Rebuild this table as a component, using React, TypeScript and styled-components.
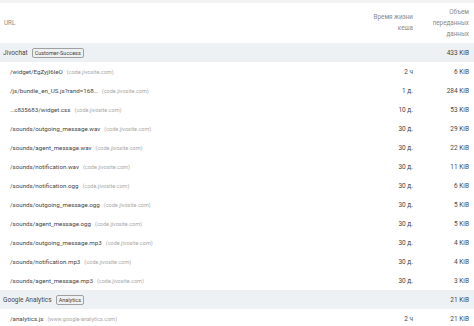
import React from "react";
import styled, { createGlobalStyle } from "styled-components";

const Global = createGlobalStyle`
  html, body { margin: 0; padding: 0; background: #fff; }
  body { font-family: Roboto, "Liberation Sans", Arial, sans-serif; }
`;

const Table = styled.div`
  width: 474px;
  border-top: 3px solid #f3f3f3;
  display: flex;
  flex-direction: column;
  color: #474747;
`;

const Row = styled.div<{ $kind?: "head" | "group" | "item" }>`
  display: grid;
  grid-template-columns: 1fr 52px 56px;
  align-items: center;
  height: ${(p) => (p.$kind === "head" ? 40 : 19)}px;
  background: ${(p) => (p.$kind === "group" ? "#eef1f4" : "#fff")};
`;

const HeadCell = styled.div<{ $right?: boolean }>`
  font-size: 6.3px;
  line-height: 11px;
  color: #8a8a8a;
  text-align: ${(p) => (p.$right ? "right" : "left")};
  padding: ${(p) => (p.$right ? "0 5px 0 0" : "0 0 0 4px")};
`;

const UrlCell = styled.div<{ $group?: boolean }>`
  display: flex;
  align-items: center;
  gap: 4px;
  padding-left: ${(p) => (p.$group ? 3 : 10)}px;
  font-size: ${(p) => (p.$group ? 6.5 : 6.2)}px;
  white-space: nowrap;
  overflow: hidden;
`;

const Domain = styled.span`
  font-size: 5.5px;
  color: #a8a8a8;
`;

const Badge = styled.span`
  font-size: 5.5px;
  border: 1px solid #a0a0a0;
  border-radius: 2px;
  padding: 1px 2px;
  line-height: 6px;
  color: #444;
`;

const NumCell = styled.div`
  font-size: 6.5px;
  text-align: right;
  padding-right: 5px;
  white-space: nowrap;
`;

type Item = { url: string; domain: string; ttl: string; size: string };
type Group = { name: string; badge: string; size: string; items: Item[] };

const jivo = "code.jivosite.com";

const groups: Group[] = [
  {
    name: "Jivochat",
    badge: "Customer-Success",
    size: "433 KiB",
    items: [
      { url: "/widget/EgZyjI6leO", domain: jivo, ttl: "2 ч", size: "6 KiB" },
      { url: "/js/bundle_en_US.js?rand=168…", domain: jivo, ttl: "1 д.", size: "284 KiB" },
      { url: "…c835683/widget.css", domain: jivo, ttl: "10 д.", size: "53 KiB" },
      { url: "/sounds/outgoing_message.wav", domain: jivo, ttl: "30 д.", size: "29 KiB" },
      { url: "/sounds/agent_message.wav", domain: jivo, ttl: "30 д.", size: "22 KiB" },
      { url: "/sounds/notification.wav", domain: jivo, ttl: "30 д.", size: "11 KiB" },
      { url: "/sounds/notification.ogg", domain: jivo, ttl: "30 д.", size: "6 KiB" },
      { url: "/sounds/outgoing_message.ogg", domain: jivo, ttl: "30 д.", size: "5 KiB" },
      { url: "/sounds/agent_message.ogg", domain: jivo, ttl: "30 д.", size: "5 KiB" },
      { url: "/sounds/outgoing_message.mp3", domain: jivo, ttl: "30 д.", size: "4 KiB" },
      { url: "/sounds/notification.mp3", domain: jivo, ttl: "30 д.", size: "4 KiB" },
      { url: "/sounds/agent_message.mp3", domain: jivo, ttl: "30 д.", size: "3 KiB" },
    ],
  },
  {
    name: "Google Analytics",
    badge: "Analytics",
    size: "21 KiB",
    items: [
      { url: "/analytics.js", domain: "www.google-analytics.com", ttl: "2 ч", size: "21 KiB" },
    ],
  },
];

export default function App() {
  return (
    <>
      <Global />
      <Table>
        <Row $kind="head">
          <HeadCell>URL</HeadCell>
          <HeadCell $right>
            Время жизни
            <br />
            кеша
          </HeadCell>
          <HeadCell $right>
            Объем
            <br />
            переданных
            <br />
            данных
          </HeadCell>
        </Row>
        {groups.map((g) => (
          <React.Fragment key={g.name}>
            <Row $kind="group">
              <UrlCell $group>
                {g.name}
                <Badge>{g.badge}</Badge>
              </UrlCell>
              <NumCell />
              <NumCell>{g.size}</NumCell>
            </Row>
            {g.items.map((it) => (
              <Row key={it.url} $kind="item">
                <UrlCell>
                  {it.url}
                  <Domain>({it.domain})</Domain>
                </UrlCell>
                <NumCell>{it.ttl}</NumCell>
                <NumCell>{it.size}</NumCell>
              </Row>
            ))}
          </React.Fragment>
        ))}
      </Table>
    </>
  );
}
